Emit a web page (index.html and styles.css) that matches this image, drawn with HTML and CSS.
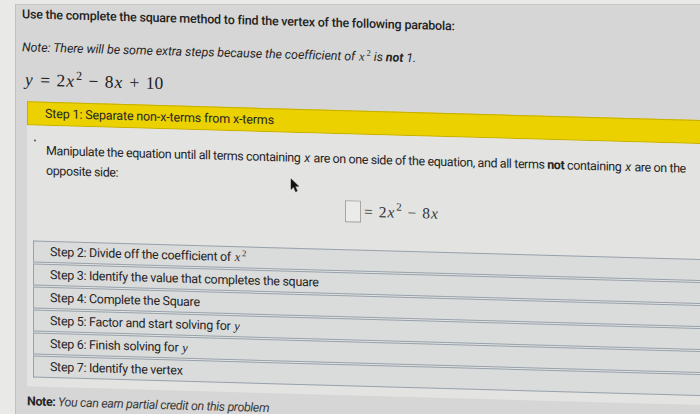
FILE: index.html
```html
<!DOCTYPE html>
<html>
<head>
<meta charset="utf-8">
<link rel="stylesheet" href="styles.css">
</head>
<body>
<div class="page">
  <div class="panel">
    <div class="content">
      <p class="intro">Use the complete the square method to find the vertex of the following parabola:</p>
      <p class="note">Note: There will be some extra steps because the coefficient of <span class="mi">x</span><sup class="sup">2</sup> is <b>not</b> 1.</p>
      <div class="eq"><span class="mi">y</span> <span class="op">=</span> 2<span class="mi">x</span><sup class="sup">2</sup> <span class="op">−</span> 8<span class="mi">x</span> <span class="op">+</span> 10</div>

      <div class="step">
        <div class="step-head">Step 1: Separate non-x-terms from x-terms</div>
        <div class="step-body">
          <p class="instr">Manipulate the equation until all terms containing <i class="var">x</i> are on one side of the equation, and all terms <b>not</b> containing <i class="var">x</i> are on the opposite side:</p>
          <div class="answer"><span class="ansbox"></span><span class="ans-eq"><span class="op">=</span> 2<span class="mi">x</span><sup class="sup">2</sup> <span class="op">−</span> 8<span class="mi">x</span></span></div>
          <div class="steps">
            <div class="row">Step 2: Divide off the coefficient of <span class="mi">x</span><sup class="sup">2</sup></div>
            <div class="row">Step 3: Identify the value that completes the square</div>
            <div class="row">Step 4: Complete the Square</div>
            <div class="row">Step 5: Factor and start solving for <span class="mi">y</span></div>
            <div class="row">Step 6: Finish solving for <span class="mi">y</span></div>
            <div class="row">Step 7: Identify the vertex</div>
          </div>
        </div>
      </div>
      <p class="foot"><b>Note:</b> <i>You can earn partial credit on this problem</i></p>
    </div>
  </div>
</div>
<svg class="cursor" width="10" height="15" viewBox="0 0 10 15"><path d="M1 0.8 L1 11.5 L3.6 9 L5.6 13.8 L7.3 13 L5.3 8.3 L8.8 8.3 Z" fill="#111" stroke="#2a2a2a" stroke-width="0.5"/></svg>
</body>
</html>
```

FILE: styles.css
```css
html, body {
  margin: 0;
  padding: 0;
}
body {
  background: #e9e9e7;
  font-family: Roboto, "Liberation Sans", sans-serif;
  color: #262626;
  width: 700px;
  height: 414px;
  overflow: hidden;
  position: relative;
}
.page {
  padding: 4px 0 0 15px;
}
.panel {
  background: #d6d6d6;
  border-left: 1px solid #c0c0c0;
  border-top: 1px solid #c8c8c8;
  height: 420px;
  box-sizing: border-box;
}
.content {
  padding: 1px 0 0 6px;
  transform: skewY(1.6deg);
  transform-origin: 0 0;
}
.intro {
  margin: 0;
  font-size: 12.5px;
  font-weight: 500;
  letter-spacing: -0.2px;
  line-height: 16px;
  color: #222;
}
.note {
  margin: 17px 0 0 0;
  font-size: 12.5px;
  font-style: italic;
  letter-spacing: -0.1px;
  line-height: 16px;
}
.mi {
  font-family: "Liberation Serif", serif;
  font-style: italic;
  padding: 0 1px;
}
.sup {
  font-family: "Liberation Serif", serif;
  font-size: 0.7em;
  line-height: 0;
  font-style: normal;
  padding-left: 1px;
}
.var {
  padding: 0 1px;
}
.eq {
  margin: 13px 0 0 2px;
  font-family: "Liberation Serif", serif;
  font-size: 17.5px;
  line-height: 22px;
  color: #222;
}
.op {
  padding: 0 2px;
}
.step {
  margin: 11px 0 0 5px;
}
.step-head {
  background: #ebd100;
  border: 1px solid #c6af00;
  border-right: none;
  height: 22px;
  line-height: 22px;
  padding-left: 17px;
  font-size: 12.5px;
  letter-spacing: -0.15px;
  color: #262626;
}
.step-body {
  background: #e3e3e1;
  padding: 15px 0 9px 6px;
}
.instr {
  margin: 0;
  padding-left: 13px;
  position: relative;
  font-size: 12.5px;
  letter-spacing: -0.4px;
  line-height: 20px;
  color: #262626;
}
.instr::before {
  content: "";
  position: absolute;
  left: 1px;
  top: -1px;
  width: 2px;
  height: 2px;
  border-radius: 50%;
  background: #555;
}
.answer {
  margin: 10px 0 0 312px;
  display: flex;
  align-items: center;
  height: 23px;
}
.ansbox {
  width: 16px;
  height: 22px;
  border: 1px solid #a6a6a6;
  background: #ebebea;
  box-sizing: border-box;
}
.ans-eq {
  font-family: "Liberation Serif", serif;
  font-size: 15.5px;
  margin-left: 1px;
  color: #333;
}
.steps {
  margin-top: 27px;
  display: flex;
  flex-direction: column;
  gap: 1px;
}
.row {
  height: 20px;
  line-height: 20px;
  border: 1px solid #98a2ab;
  border-right: none;
  background: #dadbdb;
  padding-left: 16px;
  font-size: 12.5px;
  letter-spacing: -0.3px;
  color: #262626;
}
.foot {
  margin: 7px 0 0 5px;
  font-size: 12.5px;
  letter-spacing: -0.4px;
  line-height: 15px;
  color: #262626;
}
.foot i {
  color: #3a3a3a;
}
.cursor {
  position: absolute;
  left: 290px;
  top: 178px;
}
```
